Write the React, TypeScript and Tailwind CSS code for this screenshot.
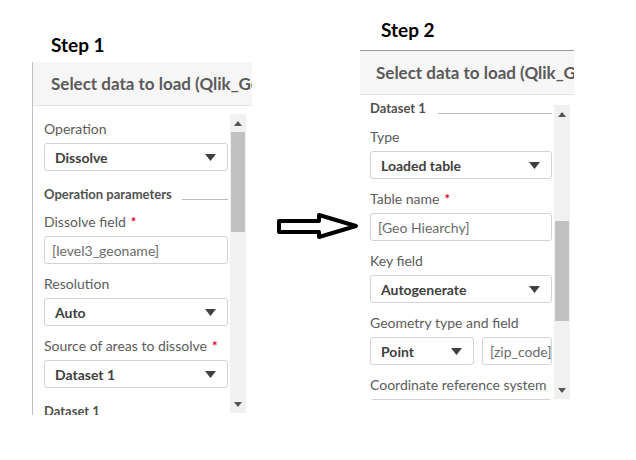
import React from "react";

const font = { fontFamily: "Lato, 'Noto Sans', sans-serif" };

function Caret() {
  return (
    <svg width="11" height="7" viewBox="0 0 11 7" className="shrink-0">
      <polygon points="0,0 11,0 5.5,7" fill="#404040" />
    </svg>
  );
}

function Select({ value, className = "" }: { value: string; className?: string }) {
  return (
    <div
      className={`flex h-[28px] items-center justify-between rounded-[3px] border border-[#d3d3d3] bg-white pl-[10px] pr-[11px] ${className}`}
    >
      <span className="whitespace-nowrap text-[14px] font-bold text-[#404040]">{value}</span>
      <Caret />
    </div>
  );
}

function Input({ value, className = "" }: { value: string; className?: string }) {
  return (
    <div
      className={`flex h-[28px] items-center overflow-hidden rounded-[3px] border border-[#d3d3d3] bg-white pl-[7px] ${className}`}
    >
      <span className="whitespace-nowrap text-[14px] text-[#6b6b6b]">{value}</span>
    </div>
  );
}

function Label({ text, required }: { text: string; required?: boolean }) {
  return (
    <div className="flex h-[20px] items-center whitespace-nowrap text-[14px] leading-[20px] text-[#5c5c5c]">
      {text}
      {required && <span className="ml-[5px] text-[13px] font-bold text-[#e4002b]">*</span>}
    </div>
  );
}

function Heading({ text, gap }: { text: string; gap: string }) {
  return (
    <div className={`flex h-[20px] items-center ${gap}`}>
      <span className="whitespace-nowrap text-[13px] font-bold text-[#505050]">{text}</span>
      <div className="mt-[8px] h-px flex-1 bg-[#bdbdbd]" />
    </div>
  );
}

function ArrowUp() {
  return (
    <svg width="8" height="5" viewBox="0 0 8 5">
      <polygon points="0,5 8,5 4,0" fill="#555" />
    </svg>
  );
}
function ArrowDown() {
  return (
    <svg width="8" height="5" viewBox="0 0 8 5">
      <polygon points="0,0 8,0 4,5" fill="#555" />
    </svg>
  );
}

function Panel1() {
  return (
    <div className="mt-[5px] w-[220px] border-l border-[#bfbfbf]">
      <div className="flex h-[44px] items-center overflow-hidden whitespace-nowrap border-b border-[#e3e3e3] bg-[#f6f6f6] pl-[18px] text-[17px] font-bold text-[#5a5a5a]">
        Select data to load (Qlik_GeoOperations)
      </div>
      <div className="flex h-[309px]">
        <div className="w-[196px] overflow-hidden pl-[11px] pr-[1px] pt-[13px]">
          <Label text="Operation" />
          <Select value="Dissolve" className="mt-[4px]" />
          <Heading text="Operation parameters" gap="mt-[14px] gap-[10px]" />
          <div className="mt-[7px]">
            <Label text="Dissolve field" required />
          </div>
          <Input value="[level3_geoname]" className="mt-[4px]" />
          <div className="mt-[10px]">
            <Label text="Resolution" />
          </div>
          <Select value="Auto" className="mt-[4px]" />
          <div className="mt-[10px]">
            <Label text="Source of areas to dissolve" required />
          </div>
          <Select value="Dataset 1" className="mt-[4px]" />
          <Heading text="Dataset 1" gap="mt-[14px] gap-[12px]" />
        </div>
        <div className="ml-[1px] mt-[8px] flex h-[299px] w-[16px] flex-col bg-[#f1f1f1]">
          <div className="flex h-[18px] items-center justify-center">
            <ArrowUp />
          </div>
          <div className="mx-auto h-[100px] w-[14px] bg-[#c1c1c1]" />
          <div className="flex-1" />
          <div className="flex h-[18px] items-center justify-center">
            <ArrowDown />
          </div>
        </div>
      </div>
    </div>
  );
}

function Panel2() {
  return (
    <div className="mt-[8px] w-[214px]">
      <div className="flex h-[45px] items-center overflow-hidden whitespace-nowrap border-b border-t border-b-[#e3e3e3] border-t-[#9a9a9a] bg-[#f6f6f6] pl-[16px] text-[17px] font-bold text-[#5a5a5a]">
        Select data to load (Qlik_GeoOperations)
      </div>
      <div className="flex h-[305px]">
        <div className="w-[193px] overflow-hidden pl-[10px] pr-[1px] pt-[4px]">
          <Heading text="Dataset 1" gap="gap-[12px]" />
          <div className="mt-[8px]">
            <Label text="Type" />
          </div>
          <Select value="Loaded table" className="mt-[4px]" />
          <div className="mt-[10px]">
            <Label text="Table name" required />
          </div>
          <Input value="[Geo Hiearchy]" className="mt-[4px]" />
          <div className="mt-[10px]">
            <Label text="Key field" />
          </div>
          <Select value="Autogenerate" className="mt-[4px]" />
          <div className="mt-[10px]">
            <Label text="Geometry type and field" />
          </div>
          <div className="mt-[4px] flex gap-[8px]">
            <Select value="Point" className="w-[104px]" />
            <Input value="[zip_code]" className="flex-1" />
          </div>
          <div className="mt-[10px]">
            <Label text="Coordinate reference system" />
          </div>
          <Input value="" className="mt-[4px]" />
        </div>
        <div className="ml-[1px] mt-[10px] flex h-[294px] w-[16px] flex-col bg-[#f1f1f1]">
          <div className="flex h-[18px] items-center justify-center">
            <ArrowUp />
          </div>
          <div className="h-[98px]" />
          <div className="mx-auto h-[100px] w-[14px] bg-[#c1c1c1]" />
          <div className="flex-1" />
          <div className="flex h-[18px] items-center justify-center">
            <ArrowDown />
          </div>
        </div>
      </div>
    </div>
  );
}

export default function App() {
  return (
    <div className="flex h-[460px] w-[636px] items-start bg-white" style={font}>
      <div className="ml-[32px] flex flex-col pt-[33px]">
        <div className="pl-[19px] text-[19px] font-bold leading-[24px] text-black">Step 1</div>
        <Panel1 />
      </div>
      <div className="ml-[23px] mt-[212px] w-[85px]">
        <svg width="84" height="28" viewBox="0 0 84 28">
          <polygon
            points="4,9 44,9 44,3 81,14 44,25 44,20 4,20"
            fill="white"
            stroke="black"
            strokeWidth="4"
            strokeLinejoin="round"
          />
        </svg>
      </div>
      <div className="flex flex-col pt-[18px]">
        <div className="pl-[21px] text-[19px] font-bold leading-[24px] text-black">Step 2</div>
        <Panel2 />
      </div>
    </div>
  );
}
